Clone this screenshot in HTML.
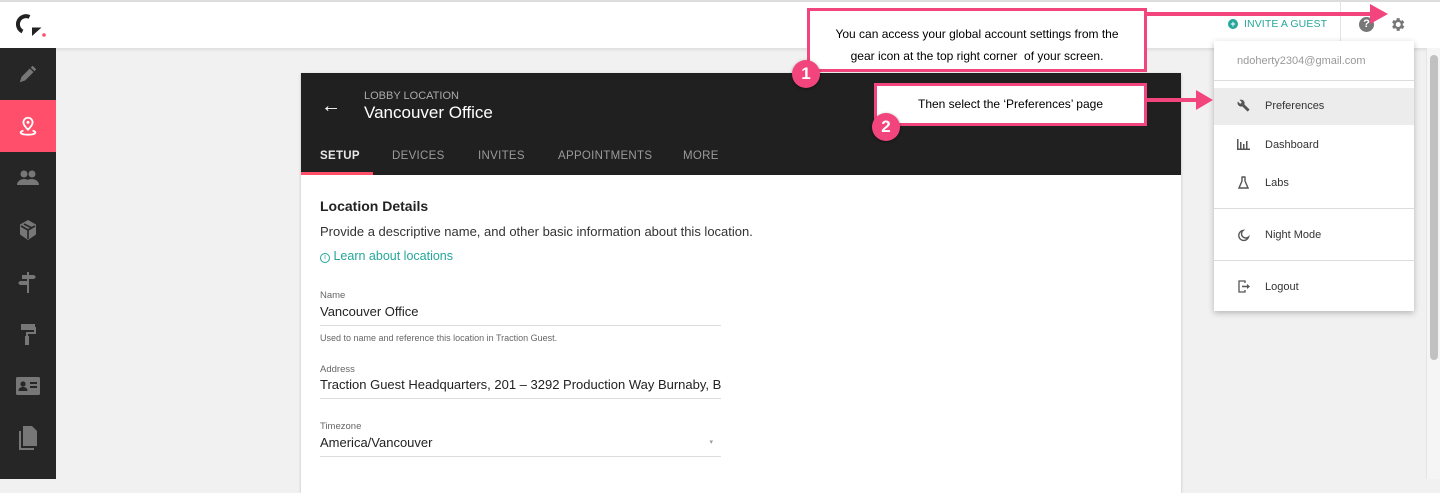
<!DOCTYPE html>
<html><head><meta charset="utf-8"><style>
*{margin:0;padding:0;box-sizing:border-box}
body{width:1440px;height:479px;overflow:hidden;background:#f1f1f1;font-family:"Liberation Sans",Arial,sans-serif;position:relative}
.abs{position:absolute}
.top{left:0;top:0;width:1440px;height:48px;background:#fff;border-top:2px solid #ddd;box-shadow:0 1px 4px rgba(0,0,0,.12)}
.side{left:0;top:48px;width:56px;height:431px;background:#262626}
.si{position:absolute;left:0;width:56px;height:52px;display:flex;align-items:center;justify-content:center}
.card{left:301px;top:73px;width:880px;height:420px;background:#fff;box-shadow:0 1px 3px rgba(0,0,0,.2)}
.hdr{position:absolute;left:0;top:0;width:880px;height:102px;background:#202020}
.tab{position:absolute;top:77px;font-size:11.5px;color:#9a9a9a;letter-spacing:.3px}
.lbl{position:absolute;left:19px;font-size:9.5px;color:#666}
.val{position:absolute;left:19px;font-size:13px;color:#222;width:401px;border-bottom:1px solid #ddd;padding-bottom:6px;white-space:nowrap;overflow:hidden}
.dd{left:1214px;top:41px;width:200px;height:270px;background:#fff;box-shadow:0 2px 6px rgba(0,0,0,.25)}
.mi{position:absolute;left:0;width:200px;font-size:11px;color:#333}
.mi span{position:absolute;left:51px}
.hr{position:absolute;left:0;width:200px;height:1px;background:#ddd}
.call{background:#fff;border:3px solid #f2457e;font-size:12px;color:#000;text-align:center}
.num{width:28px;height:28px;border-radius:50%;background:#f2457e;color:#fff;font-weight:bold;font-size:17px;text-align:center;line-height:28px;box-shadow:0 1px 3px rgba(0,0,0,.4)}
</style></head><body>
<div class="abs top"></div>
<svg class="abs" style="left:0;top:0" width="60" height="48"><path d="M29.5 17 A8 8 0 1 0 22.5 31.5" fill="none" stroke="#222" stroke-width="4"/><path d="M32 27.5 L41.5 27.5 L32 36Z" fill="#222"/><circle cx="44" cy="35" r="1.8" fill="#ff4f6a"/></svg>
<div class="abs" style="left:1228px;top:19px;width:10px;height:10px;border-radius:50%;background:#26a69a;color:#fff;font-size:9px;line-height:10px;text-align:center;font-weight:bold">+</div>
<div class="abs" style="left:1244px;top:18px;font-size:10.5px;color:#26a69a;letter-spacing:.1px">INVITE A GUEST</div>
<div class="abs" style="left:1340px;top:2px;width:1px;height:46px;background:#e3e3e3"></div>
<div class="abs" style="left:1359px;top:17px;width:15px;height:15px;border-radius:50%;background:#777;color:#fff;font-size:11px;text-align:center;line-height:15px;font-weight:bold">?</div>
<svg class="abs" style="left:1389px;top:16px" width="17" height="17" viewBox="0 0 24 24"><path fill="#777" d="M19.4 13a7.5 7.5 0 0 0 0-2l2.1-1.6-2-3.5-2.5 1a7 7 0 0 0-1.700-1L15 3h-4l-.4 2.700a7 7 0 0 0-1.700 1l-2.500-1-2 3.500L6.500 11a7.500 7.500 0 0 0 0 2l-2.100 1.600 2 3.500 2.500-1a7 7 0 0 0 1.700 1L11 21h4l.4-2.700a7 7 0 0 0 1.700-1l2.500 1 2-3.500zM13 15.500a3.500 3.500 0 1 1 0-7 3.500 3.500 0 0 1 0 7z"/></svg>

<div class="abs side">
 <div class="si" style="top:0"><svg width="22" height="22" viewBox="0 0 24 24"><path fill="#777" d="M3 21l2-6 9-9 4 4-9 9zM15 5l2-2 4 4-2 2z"/></svg></div>
 <div class="si" style="top:52px;background:#ff4f6a"><svg width="22" height="24" viewBox="0 0 24 24"><path fill="none" stroke="#fff" stroke-width="2" d="M12 16s-5-5-5-8a5 5 0 0 1 10 0c0 3-5 8-5 8z"/><circle cx="12" cy="8" r="1.6" fill="#fff"/><path fill="none" stroke="#fff" stroke-width="2" d="M7 17c-2 .5-3 1.2-3 2 0 1.5 3.5 2.5 8 2.5s8-1 8-2.5c0-.8-1-1.5-3-2"/></svg></div>
 <div class="si" style="top:104px"><svg width="24" height="20" viewBox="0 0 24 18"><circle cx="8" cy="5" r="3.5" fill="#777"/><circle cx="16" cy="5" r="3.5" fill="#777"/><path fill="#777" d="M1 16c0-4 4-6 7-6s7 2 7 6zM13 16c0-2-1-4-2-5 1-.5 3-1 5-1 3 0 7 2 7 6z"/></svg></div>
 <div class="si" style="top:156px"><svg width="20" height="22" viewBox="0 0 20 22"><path fill="#777" d="M10 1l8 4.5v10L10 21l-8-5.5v-10z"/><path fill="none" stroke="#262626" stroke-width="1.6" d="M10 11v9M10 11L3 7M10 11l7-4M6 5l8 4"/></svg></div>
 <div class="si" style="top:208px"><svg width="20" height="22" viewBox="0 0 20 22"><path fill="#777" d="M9 1h2v21H9zM4 4h12l2 2-2 2H4zM2 10h9v4H2L0 12z"/></svg></div>
 <div class="si" style="top:260px"><svg width="18" height="22" viewBox="0 0 18 22"><path fill="#777" d="M2 1h14v6H2zM16 4h1v7H9v3H7v-5h8V4zM6 13h4v9H6z"/></svg></div>
 <div class="si" style="top:312px"><svg width="24" height="18" viewBox="0 0 24 18"><rect x="0" y="0" width="24" height="18" rx="1.5" fill="#777"/><circle cx="7" cy="7" r="2.6" fill="#262626"/><path fill="#262626" d="M2.5 14c0-3 2-4 4.5-4s4.5 1 4.5 4zM14 5h7v2h-7zM14 9h7v2h-7z"/></svg></div>
 <div class="si" style="top:364px"><svg width="20" height="24" viewBox="0 0 20 24"><path fill="#777" d="M5 0h9l5 5v15H5z"/><path fill="#777" d="M1 5h2v17h13v2H1z"/></svg></div>
</div>

<div class="abs card">
 <div class="hdr">
  <div style="position:absolute;left:20px;top:22px;color:#fff;font-size:20px">←</div>
  <div style="position:absolute;left:63px;top:17px;color:#aaa;font-size:11px">LOBBY LOCATION</div>
  <div style="position:absolute;left:63px;top:30px;color:#fff;font-size:17px">Vancouver Office</div>
  <div class="tab" style="left:19px;color:#e8e8e8;font-weight:bold">SETUP</div>
  <div class="tab" style="left:91px">DEVICES</div>
  <div class="tab" style="left:177px">INVITES</div>
  <div class="tab" style="left:257px">APPOINTMENTS</div>
  <div class="tab" style="left:382px">MORE</div>
  <div style="position:absolute;left:0;top:99px;width:72px;height:3px;background:#ff4f6a"></div>
 </div>
 <div style="position:absolute;left:19px;top:125px;font-size:14px;font-weight:bold;color:#222">Location Details</div>
 <div style="position:absolute;left:19px;top:151px;font-size:13px;color:#333">Provide a descriptive name, and other basic information about this location.</div>
 <div style="position:absolute;left:19px;top:176px;font-size:12.5px;color:#26a69a"><span style="display:inline-block;width:10px;height:10px;border:1px solid #26a69a;border-radius:50%;font-size:7px;line-height:8px;text-align:center;vertical-align:1px">i</span> Learn about locations</div>
 <div class="lbl" style="top:217px">Name</div>
 <div class="val" style="top:231px">Vancouver Office</div>
 <div class="lbl" style="top:260px;font-size:9px">Used to name and reference this location in Traction Guest.</div>
 <div class="lbl" style="top:291px">Address</div>
 <div class="val" style="top:304px">Traction Guest Headquarters, 201 – 3292 Production Way Burnaby, BC</div>
 <div class="lbl" style="top:348px">Timezone</div>
 <div class="val" style="top:362px">America/Vancouver<span style="position:absolute;right:8px;top:3px;font-size:7px;color:#999">▾</span></div>
</div>

<div class="abs" style="left:1426px;top:48px;width:14px;height:431px;background:#f5f5f5;border-left:1px solid #e5e5e5"></div>
<div class="abs" style="left:1430px;top:55px;width:8px;height:305px;border-radius:4px;background:#c1c1c1"></div>

<div class="abs dd">
 <div class="mi" style="top:14px;color:#999"><span style="left:23px">ndoherty2304@gmail.com</span></div>
 <div class="hr" style="top:39px"></div>
 <div style="position:absolute;left:0;top:47px;width:200px;height:37px;background:#ececec"></div>
 <div class="mi" style="top:59px"><svg style="position:absolute;left:23px;top:-1px" width="13" height="13" viewBox="0 0 24 24"><path fill="#555" d="M22.7 19l-9.1-9.1c.9-2.3.4-5-1.5-6.9-2-2-5-2.4-7.4-1.3L9 6 6 9 1.6 4.7C.4 7.1.9 10.1 2.9 12.1c1.9 1.9 4.6 2.4 6.9 1.5l9.1 9.1c.4.4 1 .4 1.4 0l2.3-2.3c.5-.4.5-1.1.1-1.4z"/></svg><span>Preferences</span></div>
 <div class="mi" style="top:98px"><svg style="position:absolute;left:23px;top:0" width="13" height="11" viewBox="0 0 13 11"><path fill="#555" d="M0 0h1.5v11H0zM3 3h1.5v8H3zM6 5h1.5v6H6zM9 2h1.5v9H9zM1.5 9.5H13V11H1.5z"/></svg><span>Dashboard</span></div>
 <div class="mi" style="top:136px"><svg style="position:absolute;left:24px;top:-1px" width="11" height="13" viewBox="0 0 11 13"><path fill="none" stroke="#555" stroke-width="1.4" d="M3.5 1h4M4 1v4L1 12h9L7 5V1"/></svg><span>Labs</span></div>
 <div class="hr" style="top:167px"></div>
 <div class="mi" style="top:188px"><svg style="position:absolute;left:23px;top:0" width="13" height="13" viewBox="0 0 13 13"><path fill="none" stroke="#555" stroke-width="1.4" d="M6 1.5A5 5 0 1 0 11.5 8 4 4 0 0 1 6 1.5z"/></svg><span>Night Mode</span></div>
 <div class="hr" style="top:219px"></div>
 <div class="mi" style="top:240px"><svg style="position:absolute;left:24px;top:-1px" width="12" height="13" viewBox="0 0 12 13"><path fill="none" stroke="#555" stroke-width="1.3" d="M7 3V1H1v11h6v-2"/><path fill="#555" d="M4 5.8h5V4l3 2.5-3 2.5V7.2H4z"/></svg><span>Logout</span></div>
</div>

<svg class="abs" style="left:0;top:0" width="1440" height="479">
 <path d="M1146 14 H1372" stroke="#f2457e" stroke-width="4"/><path d="M1370 4 L1388 14 L1370 24Z" fill="#f2457e"/>
 <path d="M1146 100 H1198" stroke="#f2457e" stroke-width="4"/><path d="M1196 90 L1213 100 L1196 110Z" fill="#f2457e"/>
</svg>
<div class="abs call" style="left:807px;top:8px;width:340px;height:64px;padding-top:12px;line-height:22px">You can access your global account settings from the<br>gear icon at the top right corner &nbsp;of your screen.</div>
<div class="abs num" style="left:792px;top:60px">1</div>
<div class="abs call" style="left:874px;top:83px;width:273px;height:43px;line-height:37px">Then select the ‘Preferences’ page</div>
<div class="abs num" style="left:872px;top:113px">2</div>
</body></html>
